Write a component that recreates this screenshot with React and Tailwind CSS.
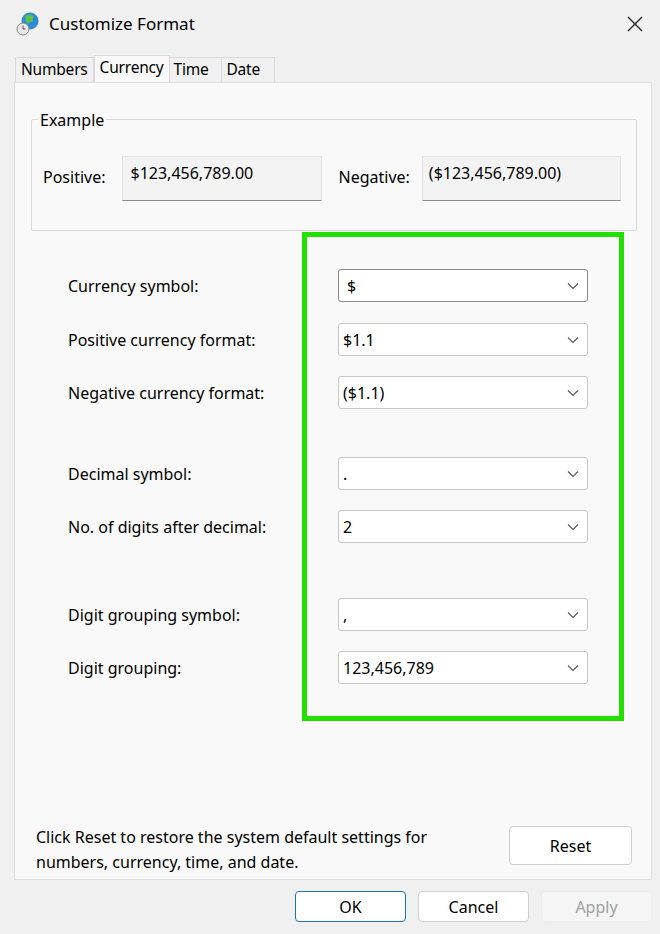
export default function App() {
  const F = { fontFamily: '"Noto Sans", "Open Sans", sans-serif' };
  const Combo = ({ v, active }) => (
    <div className={`w-[250px] h-[33px] bg-white border ${active ? 'border-[#8a8a8a]' : 'border-[#c8c8c8]'} rounded-[3px] flex items-center justify-between pl-[4px] pr-[8px] text-[16px] text-black`}>
      <span className={active ? 'pl-[4px]' : ''}>{v}</span>
      <svg width="12" height="8" viewBox="0 0 12 8"><path d="M1 1.5 L6 6.5 L11 1.5" fill="none" stroke="#555" strokeWidth="1.1" /></svg>
    </div>
  );
  const Row = ({ label, v, active, mt }) => (
    <div className="flex items-center" style={{ marginTop: mt }}>
      <div className="w-[323px] pl-[53px] text-[16px] text-black">{label}</div>
      <Combo v={v} active={active} />
    </div>
  );
  const Btn = ({ t, cls = '', dis }) => (
    <div className={`h-[31px] w-[111px] rounded-[4px] border flex items-center justify-center text-[16px] ${dis ? 'border-[#ececec] bg-[#f5f5f5] text-[#a0a0a0]' : 'border-[#cfcfcf] bg-white text-black'} ${cls}`}>{t}</div>
  );
  return (
    <div className="w-[660px] h-[934px] bg-[#f0f0f0] relative overflow-hidden" style={F}>
      <div className="h-[48px] flex items-center pl-[16px] relative">
        <svg width="24" height="24" viewBox="0 0 24 24">
          <circle cx="14" cy="9" r="8.5" fill="#2d8ad8" />
          <path d="M9 4 q4 -3 9 0 q-2 3 -1 6 q-3 -1 -5 2 q-3 -3 -3 -8z" fill="#5cc04a" />
          <circle cx="7" cy="17" r="6" fill="#e8e8e8" stroke="#888" strokeWidth="1" />
          <path d="M7 13.5 V17 H9.5" stroke="#555" strokeWidth="1" fill="none" />
        </svg>
        <span className="ml-[9px] text-[17px] text-black">Customize Format</span>
        <svg className="absolute right-[16px] top-[15px]" width="18" height="18" viewBox="0 0 18 18"><path d="M2 2 L16 16 M16 2 L2 16" stroke="#222" strokeWidth="1.4" /></svg>
      </div>
      <div className="flex items-end pl-[15px] h-[34px] text-[15.5px] text-black tracking-[-0.2px]">
        <div className="h-[25px] px-[5px] border border-[#d9d9d9] border-b-0 bg-[#f0f0f0] flex items-center">Numbers</div>
        <div className="h-[28px] px-[5px] border border-[#d9d9d9] border-b-0 bg-[#f9f9f9] flex items-start relative top-[1px]">Currency</div>
        <div className="h-[25px] px-[4px] w-[52px] border border-[#d9d9d9] border-b-0 border-l-0 flex items-center">Time</div>
        <div className="h-[25px] px-[5px] w-[53px] border border-[#d9d9d9] border-b-0 border-l-0 flex items-center">Date</div>
      </div>
      <div className="mx-[14px] w-[638px] h-[798px] bg-[#f9f9f9] border border-[#dedede] relative">
        <div className="mt-[36px] ml-[16px] w-[606px] h-[112px] border border-[#d8d8d8] rounded-[2px] relative">
          <span className="absolute left-[6px] top-[-12px] bg-[#f9f9f9] px-[2px] text-[16px]">Example</span>
          <div className="flex items-start mt-[36px] ml-[11px] text-[16px]">
            <span className="pt-[9px]">Positive:</span>
            <div className="ml-[16px] w-[200px] h-[45px] bg-[#f3f3f3] border border-[#e3e3e3] border-b-[#8a8a8a] pl-[8px] pt-[4px]">$123,456,789.00</div>
            <span className="ml-[17px] pt-[9px]">Negative:</span>
            <div className="ml-[12px] w-[199px] h-[45px] bg-[#f3f3f3] border border-[#e3e3e3] border-b-[#8a8a8a] pl-[6px] pt-[4px]">($123,456,789.00)</div>
          </div>
        </div>
        <div className="absolute left-[287px] top-[149px] w-[322px] h-[489px] border-[5px] border-[#22e000]" />
        <div className="mt-[38px]">
          <Row label="Currency symbol:" v="$" active mt={0} />
          <Row label="Positive currency format:" v="$1.1" mt={21} />
          <Row label="Negative currency format:" v="($1.1)" mt={20} />
          <Row label="Decimal symbol:" v="." mt={48} />
          <Row label="No. of digits after decimal:" v="2" mt={20} />
          <Row label="Digit grouping symbol:" v="," mt={55} />
          <Row label="Digit grouping:" v="123,456,789" mt={20} />
        </div>
        <div className="absolute left-[21px] top-[742px] text-[16px] leading-[25px] text-black w-[440px]">
          Click Reset to restore the system default settings for numbers, currency, time, and date.
        </div>
        <Btn t="Reset" cls="absolute left-[494px] top-[743px] w-[123px] h-[39px]" />
      </div>
      <div className="flex justify-end gap-[12px] pr-[8px] mt-[11px]">
        <Btn t="OK" cls="!border-[#1f6fc0]" />
        <Btn t="Cancel" />
        <Btn t="Apply" dis />
      </div>
    </div>
  );
}
